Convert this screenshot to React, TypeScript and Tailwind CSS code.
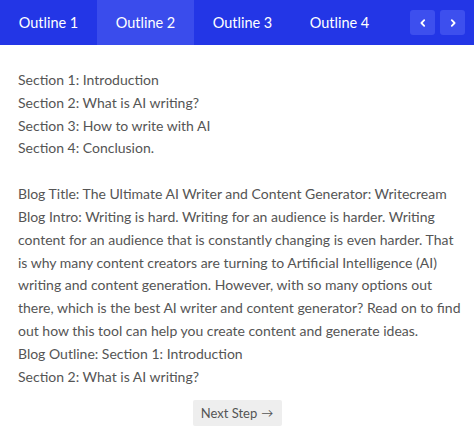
import React from "react";

const lines1 = [
  "Section 1: Introduction",
  "Section 2: What is AI writing?",
  "Section 3: How to write with AI",
  "Section 4: Conclusion.",
];

const lines2 = [
  "Blog Title: The Ultimate AI Writer and Content Generator: Writecream",
  "Blog Intro: Writing is hard. Writing for an audience is harder. Writing",
  "content for an audience that is constantly changing is even harder. That",
  "is why many content creators are turning to Artificial Intelligence (AI)",
  "writing and content generation. However, with so many options out",
  "there, which is the best AI writer and content generator? Read on to find",
  "out how this tool can help you create content and generate ideas.",
  "Blog Outline: Section 1: Introduction",
  "Section 2: What is AI writing?",
];

export default function App() {
  return (
    <div className="w-[474px] h-[439px] bg-white overflow-hidden" style={{ fontFamily: "Lato, 'Noto Sans', sans-serif" }}>
      <div className="h-[45px] bg-[#2336e6] flex items-stretch">
        {["Outline 1", "Outline 2", "Outline 3", "Outline 4"].map((t, i) => (
          <div
            key={t}
            className={`w-[97px] flex items-center justify-center text-[14.5px] text-white ${i === 1 ? "bg-[#3a4cec]" : ""}`}
          >
            {t}
          </div>
        ))}
        <div className="flex-1 flex items-center justify-end gap-[5px] pr-[9px]">
          <button className="w-[25px] h-[25px] rounded-[3px] bg-[#3d4fee] flex items-center justify-center">
            <svg width="10" height="10" viewBox="0 0 10 10"><path d="M6.2 2.2 3.4 5l2.8 2.8" fill="none" stroke="white" strokeWidth="1.8" strokeLinecap="round" strokeLinejoin="round" /></svg>
          </button>
          <button className="w-[25px] h-[25px] rounded-[3px] bg-[#3d4fee] flex items-center justify-center">
            <svg width="10" height="10" viewBox="0 0 10 10"><path d="M3.8 2.2 6.6 5 3.8 7.8" fill="none" stroke="white" strokeWidth="1.8" strokeLinecap="round" strokeLinejoin="round" /></svg>
          </button>
        </div>
      </div>
      <div className="pl-[18px] pt-[24px] text-[14px] leading-[22.8px] text-[#555555]">
        {lines1.map((l) => (
          <div key={l} className="whitespace-nowrap">{l}</div>
        ))}
        <div className="h-[23px]" />
        {lines2.map((l, i) => (
          <div key={i} className="whitespace-nowrap">{l}</div>
        ))}
      </div>
      <div className="flex justify-center pt-[12px]">
        <button className="h-[26px] w-[89px] bg-[#eeeeee] rounded-[2px] text-[13px] text-[#555555] flex items-center justify-center gap-[4px]">
          Next Step <span className="text-[12px]">→</span>
        </button>
      </div>
    </div>
  );
}
